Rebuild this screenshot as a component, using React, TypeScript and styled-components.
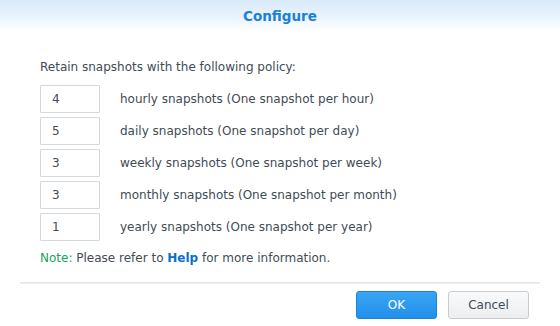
import React from "react";
import styled, { createGlobalStyle } from "styled-components";

const GlobalStyle = createGlobalStyle`
  html, body {
    margin: 0;
    padding: 0;
    background: #ffffff;
  }
  body {
    font-family: "DejaVu Sans", Verdana, sans-serif;
  }
`;

const Dialog = styled.div`
  width: 560px;
  height: 326px;
  display: flex;
  flex-direction: column;
  background: #ffffff;
  color: #414b55;
  font-size: 12px;
`;

const Header = styled.div`
  height: 32px;
  display: flex;
  align-items: center;
  justify-content: center;
  background: linear-gradient(to bottom, #d8eafa 0%, #ecf5fd 60%, #ffffff 100%);
`;

const Title = styled.div`
  font-size: 13.5px;
  font-weight: bold;
  color: #1b80d8;
`;

const Body = styled.div`
  padding: 27px 40px 0;
  display: flex;
  flex-direction: column;
`;

const Intro = styled.div`
  line-height: 16px;
  margin-bottom: 10px;
`;

const Rows = styled.div`
  display: flex;
  flex-direction: column;
  gap: 4px;
`;

const Row = styled.div`
  display: flex;
  align-items: center;
  gap: 20px;
`;

const CountInput = styled.input`
  box-sizing: border-box;
  width: 60px;
  height: 28px;
  border: 1px solid #d3d8dc;
  border-radius: 1px;
  padding: 0 11px;
  font-family: inherit;
  font-size: 12px;
  color: #414b55;
  background: #ffffff;
  outline: none;
`;

const Label = styled.span`
  line-height: 16px;
`;

const Note = styled.div`
  margin-top: 9px;
  line-height: 16px;
`;

const NoteTag = styled.span`
  color: #1aa05e;
`;

const HelpLink = styled.span`
  color: #0a6fca;
  font-weight: bold;
`;

const Divider = styled.div`
  margin: 16px 20px 0;
  height: 2px;
  background: linear-gradient(to bottom, #e2e4e6, #f2f3f4);
`;

const Footer = styled.div`
  display: flex;
  justify-content: flex-end;
  gap: 11px;
  padding: 7px 31px 0 0;
`;

const Button = styled.button<{ $primary?: boolean }>`
  box-sizing: border-box;
  width: 81px;
  height: 28px;
  border-radius: 3px;
  font-family: "DejaVu Sans", Verdana, sans-serif;
  font-size: 12px;
  cursor: pointer;
  border: 1px solid ${(p) => (p.$primary ? "#1c82d6" : "#c8ccd0")};
  color: ${(p) => (p.$primary ? "#ffffff" : "#414b55")};
  background: ${(p) =>
    p.$primary
      ? "linear-gradient(to bottom, #3aa5f4, #2190ea)"
      : "linear-gradient(to bottom, #f9fafb, #eceef0)"};
`;

const policies = [
  { value: "4", label: "hourly snapshots (One snapshot per hour)" },
  { value: "5", label: "daily snapshots (One snapshot per day)" },
  { value: "3", label: "weekly snapshots (One snapshot per week)" },
  { value: "3", label: "monthly snapshots (One snapshot per month)" },
  { value: "1", label: "yearly snapshots (One snapshot per year)" },
];

export default function App() {
  return (
    <>
      <GlobalStyle />
      <Dialog>
        <Header>
          <Title>Configure</Title>
        </Header>
        <Body>
          <Intro>Retain snapshots with the following policy:</Intro>
          <Rows>
            {policies.map((p, i) => (
              <Row key={i}>
                <CountInput defaultValue={p.value} />
                <Label>{p.label}</Label>
              </Row>
            ))}
          </Rows>
          <Note>
            <NoteTag>Note:</NoteTag> Please refer to <HelpLink>Help</HelpLink> for more
            information.
          </Note>
        </Body>
        <Divider />
        <Footer>
          <Button $primary>OK</Button>
          <Button>Cancel</Button>
        </Footer>
      </Dialog>
    </>
  );
}
